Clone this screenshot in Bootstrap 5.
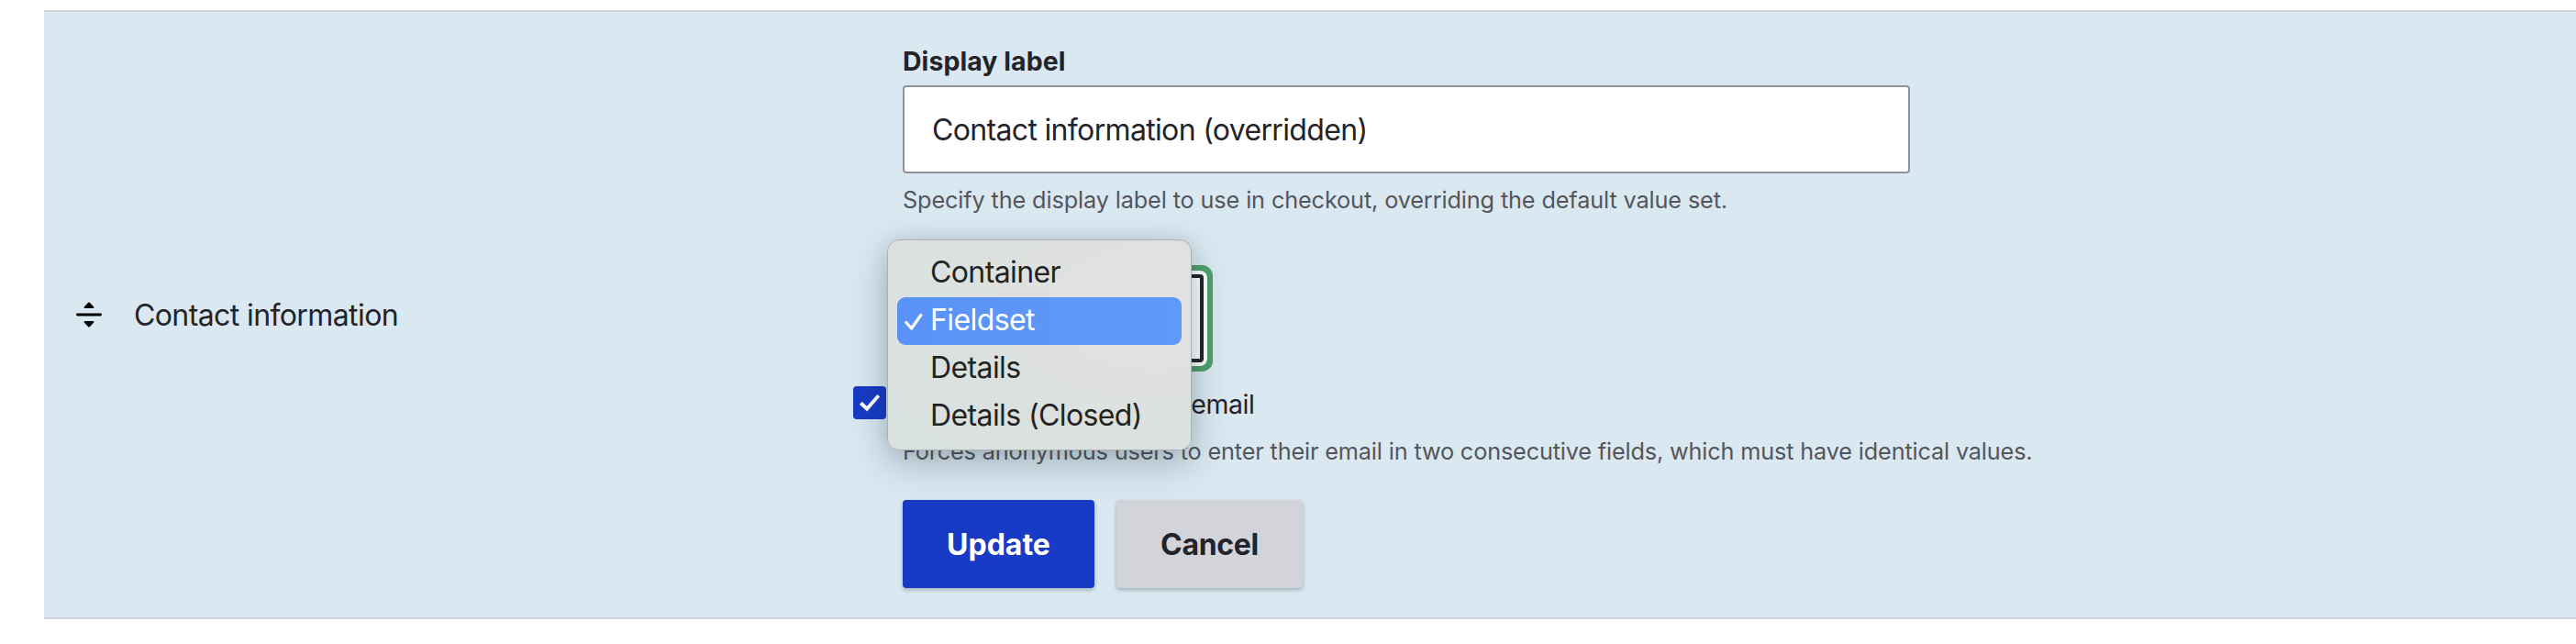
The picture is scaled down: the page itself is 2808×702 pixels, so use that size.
<!DOCTYPE html>
<html lang="en">
<head>
<meta charset="utf-8">
<meta name="viewport" content="width=device-width, initial-scale=1">
<title>Checkout flow</title>
<link href="https://cdn.jsdelivr.net/npm/bootstrap@5.3.0/dist/css/bootstrap.min.css" rel="stylesheet">
<style>
body{font-family:Inter,"Liberation Sans",sans-serif;font-size:32px;line-height:48px;letter-spacing:-.48px;color:#232429;background:#fff;overflow:hidden}
.pane-row{margin:11px 0 0 48px;background:#dae8f1;border-top:2px solid #d0d5dc;border-bottom:2px solid #d0d1d9}
.pane-name{width:936px;padding-left:35px;gap:35px}
.pane-title{letter-spacing:-.6px;padding-top:2px}
.pane-form{padding:36px 0 32px}
.form-label{font-size:28.44px;line-height:36px;font-weight:700;letter-spacing:.08px;margin-bottom:8px}
.text-input.form-control{width:1098px;height:96px;border:2px solid #8e929c;border-radius:4px;padding:1px 30px 0;font-size:32px;color:#232429;letter-spacing:-.66px;background:#fff}
.help{font-size:25.28px;line-height:32px;color:#55565b;letter-spacing:-.13px;margin-top:13px}
.wrapper-field{margin-top:21px}
.select-box.form-select{width:328px;height:96px;border:4px solid #232429;border-radius:4px;background:#fff;box-shadow:0 0 0 4px #fff,0 0 0 10px #4fa06c}
.option-menu.dropdown-menu{top:-38px;left:-17px;margin:0;width:332px;height:230px;padding:10px;border:1px solid #a9b3b6;border-radius:13px;background:radial-gradient(ellipse 190px 115px at 88% 32%,#e2e0e0 15%,#dce1df 110%,#d9e1df 180%);box-shadow:0 13px 42px rgba(20,40,50,.29),0 0 18px rgba(20,40,50,.08)}
.option-menu .dropdown-item{height:52px;line-height:50px;padding:0 0 0 36px;border-radius:9px;color:#222423;font-size:32px;letter-spacing:-.6px;position:relative}
.option-menu .dropdown-item.active{background:linear-gradient(90deg,#5993f7,#6199f7);color:#fff}
.option-menu svg{position:absolute;left:8px;top:17px}
.confirm{margin:26px 0 0 -54px;gap:18px}
.tick{width:36px;height:36px;border-radius:4px;background:#173bc5}
.confirm-text{font-size:28.44px;line-height:36px;letter-spacing:-.4px;padding-top:2px}
.confirm-help{margin-top:17px;letter-spacing:-.16px}
.actions{margin-top:37px;gap:24px}
.actions .btn{height:96px;border:0;border-radius:4px;font-size:32px;font-weight:700;line-height:48px;padding:2px 0 0;letter-spacing:0;box-shadow:0 2px 4px rgba(20,35,45,.3)}
.btn-update,.btn-update:hover{width:209px;background:#173bc5;color:#fff}
.btn-cancel,.btn-cancel:hover{width:203px;background:#d3d4d9;color:#232429}
.actions .btn-cancel{letter-spacing:-.3px}
</style>
</head>
<body>
<main class="pane-row d-flex align-items-center">
  <div class="pane-name d-flex align-items-center flex-shrink-0">
    <svg width="28" height="28" viewBox="0 0 28 28" aria-hidden="true"><path d="M1.4 14h25.2" stroke="#000" stroke-width="2.8" stroke-linecap="round"/><path d="M14 .5q.6 0 1 .5l4.3 4.6q.5 1.5-.8 1.5h-9q-1.3 0-.8-1.5L13 1q.4-.5 1-.5zM14 27.5q-.6 0-1-.5l-4.3-4.6q-.5-1.5.8-1.5h9q1.3 0 .8 1.5L15 27q-.4.5-1 .5z" fill="#000"/></svg>
    <span class="pane-title">Contact information</span>
  </div>
  <form class="pane-form">
    <label class="form-label d-block" for="display-label">Display label</label>
    <input id="display-label" class="form-control text-input" type="text" value="Contact information (overridden)">
    <div class="help">Specify the display label to use in checkout, overriding the default value set.</div>
    <div class="wrapper-field">
      <div class="form-label">Wrapper element</div>
      <div class="position-relative">
        <div class="form-select select-box"></div>
        <div class="dropdown-menu option-menu show">
          <a class="dropdown-item">Container</a>
          <a class="dropdown-item active"><svg width="20" height="20" viewBox="0 0 20 20" fill="none"><path d="M1.8 10.5 7.6 17 17.8 2.5" stroke="#fff" stroke-width="3.2" stroke-linecap="round" stroke-linejoin="round"/></svg>Fieldset</a>
          <a class="dropdown-item">Details</a>
          <a class="dropdown-item">Details (Closed)</a>
        </div>
      </div>
    </div>
    <div class="confirm d-flex align-items-start">
      <span class="tick d-flex align-items-center justify-content-center"><svg width="36" height="36" viewBox="0 0 36 36" fill="none"><path d="M8.3 18.3 15 24.7 27.7 10.2" stroke="#fff" stroke-width="4"/></svg></span>
      <span class="confirm-text">Require double entry of email</span>
    </div>
    <div class="help confirm-help">Forces anonymous users to enter their email in two consecutive fields, which must have identical values.</div>
    <div class="actions d-flex">
      <button type="button" class="btn btn-update">Update</button>
      <button type="button" class="btn btn-cancel">Cancel</button>
    </div>
  </form>
</main>
<script src="https://cdn.jsdelivr.net/npm/bootstrap@5.3.0/dist/js/bootstrap.bundle.min.js"></script>
</body>
</html>
